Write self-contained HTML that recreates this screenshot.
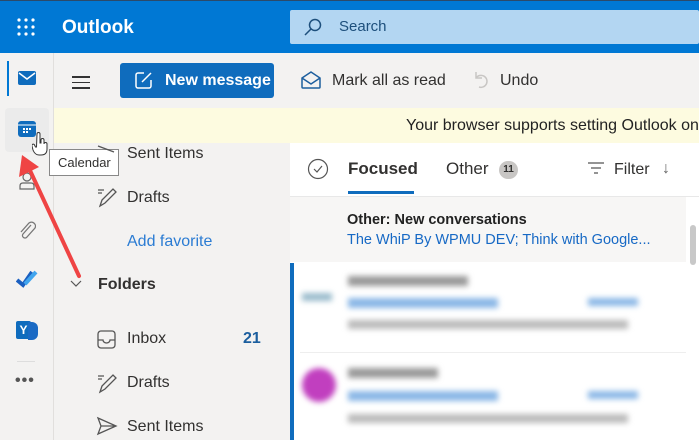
<!DOCTYPE html>
<html><head><style>
*{margin:0;padding:0;box-sizing:border-box}
body{width:699px;height:440px;overflow:hidden;position:relative;font-family:"Liberation Sans",sans-serif;background:#f3f2f1;color:#323130}
.a{position:absolute}
.t{font-size:15px;white-space:nowrap;line-height:18px}
.blur{filter:blur(3px)}
</style></head><body>
<div class="a" style="left:0;top:0;width:699px;height:53px;background:#0078d4;border-top:1px solid #2b4a6a"></div>
<svg class="a" style="left:17px;top:18px" width="18" height="18"><g fill="#fff"><circle cx="2" cy="2" r="1.6"/><circle cx="9" cy="2" r="1.6"/><circle cx="16" cy="2" r="1.6"/><circle cx="2" cy="9" r="1.6"/><circle cx="9" cy="9" r="1.6"/><circle cx="16" cy="9" r="1.6"/><circle cx="2" cy="16" r="1.6"/><circle cx="9" cy="16" r="1.6"/><circle cx="16" cy="16" r="1.6"/></g></svg>
<div class="a" style="left:62px;top:17px;color:#fff;font-size:19px;font-weight:bold;line-height:22px">Outlook</div>
<div class="a" style="left:290px;top:10px;width:409px;height:34px;background:#b3d6f2;border-radius:2px"></div>
<svg class="a" style="left:303px;top:18px" width="20" height="18"><circle cx="12" cy="7" r="5.5" fill="none" stroke="#1d4f7c" stroke-width="1.5"/><line x1="8" y1="11" x2="2" y2="17" stroke="#1d4f7c" stroke-width="1.5"/></svg>
<div class="a t" style="left:339px;top:18px;color:#1d4f7c">Search</div>
<div class="a" style="left:53px;top:53px;width:1px;height:387px;background:#e1dfdd"></div>
<div class="a" style="left:7px;top:61px;width:2px;height:35px;background:#0078d4"></div>
<svg class="a" style="left:17px;top:70px" width="20" height="16"><rect x="1" y="1" width="18" height="14" rx="2" fill="#0f6cbd"/><path d="M2 3l8 6 8-6" stroke="#fff" stroke-width="1.5" fill="none"/></svg>
<div class="a" style="left:5px;top:108px;width:44px;height:44px;background:#ebebeb;border-radius:4px"></div>
<svg class="a" style="left:18px;top:121px" width="18" height="17"><rect x="0" y="0" width="18" height="16" rx="3" fill="#0f6cbd"/><line x1="0" y1="4" x2="18" y2="4" stroke="#fff"/><g fill="#fff"><rect x="5" y="7" width="2" height="2"/><rect x="8" y="7" width="2" height="2"/><rect x="11" y="7" width="2" height="2"/><rect x="5" y="10" width="2" height="2"/><rect x="8" y="10" width="2" height="2"/></g></svg>
<svg class="a" style="left:32px;top:132px" width="16" height="24"><path d="M5 2a1.5 1.5 0 0 1 3 0v9h1v-3a1.5 1.5 0 0 1 3 0v4a1.5 1.5 0 0 1 3 0v5q0 6-6 6h-2q-4 0-6-5l-1-4a1.3 1.3 0 0 1 2.5-1l1 2h1z" fill="#fff" stroke="#333" stroke-width="1"/></svg>
<div class="a" style="left:49px;top:149px;width:70px;height:27px;background:#fff;border:1px solid #888;font-size:13px;padding:5px 0 0 8px">Calendar</div>
<svg class="a" style="left:17px;top:172px" width="20" height="18"><circle cx="10" cy="5" r="4" fill="none" stroke="#666" stroke-width="1.2"/><path d="M3 17v-3q0-3 3-3h8q3 0 3 3v3z" fill="none" stroke="#666" stroke-width="1.2"/></svg>
<svg class="a" style="left:18px;top:220px" width="18" height="22"><path d="M13 5l-8 9a2.5 2.5 0 0 0 4 3l8-9a4 4 0 0 0-6-5l-8 9" fill="none" stroke="#777" stroke-width="1.3"/></svg>
<svg class="a" style="left:16px;top:270px" width="22" height="18"><path d="M1 10l6 5 9-13" stroke="#1a5fc0" stroke-width="4" fill="none"/><path d="M9 14l11-12" stroke="#41a5ee" stroke-width="4"/></svg>
<div class="a" style="left:16px;top:321px;width:15px;height:18px;background:#0f6cbd;color:#fff;font-size:12px;font-weight:bold;text-align:center;line-height:18px;border-radius:2px">Y</div>
<div class="a" style="left:28px;top:322px;width:10px;height:18px;background:#1a6ac4;border-radius:0 6px 6px 0"></div>
<div class="a" style="left:17px;top:361px;width:18px;height:1px;background:#ddd"></div>
<div class="a" style="left:15px;top:372px;font-size:16px;letter-spacing:1px;color:#555;font-weight:bold">•••</div>
<svg class="a" style="left:15px;top:150px" width="70" height="130"><line x1="64" y1="126" x2="12" y2="14" stroke="#ef4444" stroke-width="4" stroke-linecap="round"/><path d="M7 5l-3 22 20-10z" fill="#ef4444"/></svg>
<div class="a" style="left:72px;top:76px;width:18px"><div style="height:1.5px;background:#333;margin-bottom:4px"></div><div style="height:1.5px;background:#333;margin-bottom:4px"></div><div style="height:1.5px;background:#333"></div></div>
<div class="a" style="left:120px;top:63px;width:154px;height:35px;background:#0f6cbd;border-radius:3px"></div>
<svg class="a" style="left:134px;top:70px" width="20" height="20"><path d="M10 3H4a2 2 0 0 0-2 2v11a2 2 0 0 0 2 2h11a2 2 0 0 0 2-2v-6" fill="none" stroke="#fff" stroke-width="1.5"/><path d="M8 12l9-9" stroke="#fff" stroke-width="1.5"/></svg>
<div class="a t" style="left:165px;top:72px;color:#fff;font-weight:bold;font-size:16px">New message</div>
<svg class="a" style="left:300px;top:70px" width="22" height="20"><path d="M2 8l9-6 9 6v9a1 1 0 0 1-1 1H3a1 1 0 0 1-1-1z M2 8l9 6 9-6" fill="none" stroke="#1d5f9e" stroke-width="1.5"/></svg>
<div class="a t" style="left:332px;top:72px;font-size:16px">Mark all as read</div>
<svg class="a" style="left:472px;top:70px" width="18" height="20"><path d="M4 2v6h6 M4 8a6 6 0 1 1 3 9" fill="none" stroke="#c8c6c4" stroke-width="1.5"/></svg>
<div class="a t" style="left:500px;top:72px;font-size:16px">Undo</div>
<div class="a" style="left:54px;top:108px;width:645px;height:35px;background:#fdfbe0"></div>
<div class="a t" style="left:406px;top:117px;color:#222;font-size:16px">Your browser supports setting Outlook on</div>
<svg class="a" style="left:96px;top:145px" width="20" height="14"><path d="M2 1l16 6" stroke="#555" stroke-width="1.3"/></svg>
<div class="a t" style="left:127px;top:145px;font-size:16px">Sent Items</div>
<svg class="a" style="left:96px;top:186px" width="22" height="22"><path d="M2 4h6M2 7h4M4 20l2-6 11-11 3 3-11 11z" fill="none" stroke="#555" stroke-width="1.3"/></svg>
<div class="a t" style="left:127px;top:189px;font-size:16px">Drafts</div>
<div class="a t" style="left:127px;top:233px;font-size:16px;color:#2b7cd3">Add favorite</div>
<svg class="a" style="left:70px;top:280px" width="12" height="8"><path d="M1 1l5 5 5-5" stroke="#555" fill="none" stroke-width="1.2"/></svg>
<div class="a t" style="left:98px;top:276px;font-size:16px;font-weight:bold">Folders</div>
<svg class="a" style="left:97px;top:330px" width="20" height="20"><rect x="1" y="1" width="17" height="17" rx="3" fill="none" stroke="#555" stroke-width="1.3"/><path d="M1 10h5a3.5 3 0 0 0 7 0h5" fill="none" stroke="#555" stroke-width="1.3"/></svg>
<div class="a t" style="left:127px;top:330px;font-size:16px">Inbox</div>
<div class="a t" style="left:243px;top:330px;font-size:16px;color:#1b5e9e;font-weight:bold">21</div>
<svg class="a" style="left:96px;top:372px" width="22" height="22"><path d="M2 4h6M2 7h4M4 20l2-6 11-11 3 3-11 11z" fill="none" stroke="#555" stroke-width="1.3"/></svg>
<div class="a t" style="left:127px;top:374px;font-size:16px">Drafts</div>
<svg class="a" style="left:96px;top:416px" width="22" height="20"><path d="M2 2l18 8-18 8 3-8z M5 10h15" fill="none" stroke="#555" stroke-width="1.3"/></svg>
<div class="a t" style="left:127px;top:418px;font-size:16px">Sent Items</div>
<div class="a" style="left:290px;top:143px;width:409px;height:297px;background:#fff"></div>
<svg class="a" style="left:307px;top:158px" width="22" height="22"><circle cx="11" cy="11" r="9.5" fill="none" stroke="#555" stroke-width="1.2"/><path d="M7 11l3 3 5-6" fill="none" stroke="#555" stroke-width="1.2"/></svg>
<div class="a t" style="left:348px;top:160px;font-size:17px;font-weight:bold">Focused</div>
<div class="a" style="left:348px;top:191px;width:66px;height:3px;background:#0f6cbd"></div>
<div class="a t" style="left:446px;top:160px;font-size:17px">Other</div>
<div class="a" style="left:499px;top:161px;width:19px;height:18px;border-radius:9px;background:#c8c6c4;font-size:10px;text-align:center;line-height:18px;font-weight:bold">11</div>
<svg class="a" style="left:587px;top:161px" width="18" height="14"><path d="M1 2h16M4 7h10M7 12h4" stroke="#555" stroke-width="1.3"/></svg>
<div class="a t" style="left:614px;top:161px;font-size:16px">Filter</div>
<div class="a t" style="left:662px;top:160px;font-size:16px;color:#666">↓</div>
<div class="a" style="left:290px;top:196px;width:409px;height:1px;background:#e8e8e8"></div>
<div class="a" style="left:290px;top:197px;width:396px;height:65px;background:#f7f6f5"></div>
<div class="a t" style="left:347px;top:211px;font-weight:bold;font-size:14.5px;color:#222">Other: New conversations</div>
<div class="a t" style="left:347px;top:231px;font-size:14.5px;color:#1769c5">The WhiP By WPMU DEV; Think with Google...</div>
<div class="a" style="left:690px;top:225px;width:6px;height:40px;background:#c8c8c8;border-radius:3px"></div>
<div class="a" style="left:290px;top:263px;width:4px;height:177px;background:#0f6cbd"></div>
<div class="a" style="left:300px;top:352px;width:386px;height:1px;background:#eee"></div>
<div class="a blur" style="left:348px;top:276px;width:120px;height:10px;background:#999"></div>
<div class="a blur" style="left:348px;top:298px;width:150px;height:10px;background:#8ab7e6"></div>
<div class="a blur" style="left:588px;top:298px;width:50px;height:8px;background:#8ab7e6"></div>
<div class="a blur" style="left:348px;top:320px;width:280px;height:9px;background:#bbb"></div>
<div class="a blur" style="left:302px;top:293px;width:30px;height:8px;background:#9bc"></div>
<div class="a blur" style="left:302px;top:368px;width:34px;height:34px;border-radius:50%;background:#c13fbf"></div>
<div class="a blur" style="left:348px;top:368px;width:90px;height:10px;background:#999"></div>
<div class="a blur" style="left:348px;top:391px;width:150px;height:10px;background:#8ab7e6"></div>
<div class="a blur" style="left:588px;top:391px;width:50px;height:8px;background:#8ab7e6"></div>
<div class="a blur" style="left:348px;top:414px;width:280px;height:9px;background:#bbb"></div>
</body></html>
